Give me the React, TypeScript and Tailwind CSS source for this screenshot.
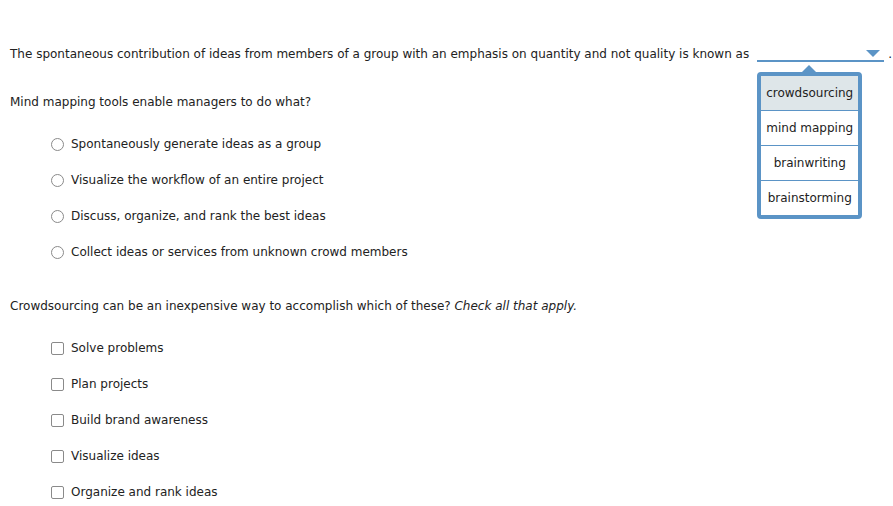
import React from "react";

const radios = [
  "Spontaneously generate ideas as a group",
  "Visualize the workflow of an entire project",
  "Discuss, organize, and rank the best ideas",
  "Collect ideas or services from unknown crowd members",
];

const checks = [
  "Solve problems",
  "Plan projects",
  "Build brand awareness",
  "Visualize ideas",
  "Organize and rank ideas",
];

const options = ["crowdsourcing", "mind mapping", "brainwriting", "brainstorming"];

export default function App() {
  return (
    <div
      className="w-[893px] h-[506px] bg-white text-[#222] text-[12px] overflow-hidden"
      style={{ fontFamily: '"DejaVu Sans", Verdana, sans-serif' }}
    >
      <div className="pt-[45px] pl-[10px] flex items-end">
        <span className="leading-[16px]">
          The spontaneous contribution of ideas from members of a group with an emphasis on quantity and not quality is known as
        </span>
        <div className="relative ml-[8px] w-[127px] h-[17px] border-b-2 border-[#5b94c6]">
          <svg className="absolute right-[4px] top-[5px]" width="14" height="7" viewBox="0 0 14 7">
            <path d="M0 0 H14 L7 7 Z" fill="#5b94c6" />
          </svg>
          <div className="absolute left-0 top-[20px] w-[105px]">
            <div className="flex justify-center">
              <svg width="14" height="7" viewBox="0 0 14 7" className="ml-[-2px]">
                <path d="M0 7 L7 0 L14 7 Z" fill="#5b94c6" />
              </svg>
            </div>
            <div className="border-4 border-[#5b94c6] rounded-[4px] bg-white">
              {options.map((o, i) => (
                <div
                  key={o}
                  className={`flex items-center justify-center ${i > 0 ? "h-[35px] border-t border-[#5b94c6]" : "h-[34px] bg-[#dee6e9]"} ${i === 3 ? "h-[33px]" : ""}`}
                >
                  {o}
                </div>
              ))}
            </div>
          </div>
        </div>
        <span className="ml-[4px] leading-[16px]">.</span>
      </div>

      <div className="pl-[10px] mt-[32px] leading-[16px]">Mind mapping tools enable managers to do what?</div>

      <div className="pl-[51px] mt-[26px] flex flex-col gap-[20px]">
        {radios.map((r) => (
          <div key={r} className="flex items-center h-[16px]">
            <span className="w-[13px] h-[13px] rounded-full border border-[#8a8a8a] bg-white" />
            <span className="ml-[7px] leading-[16px]">{r}</span>
          </div>
        ))}
      </div>

      <div className="pl-[10px] mt-[38px] leading-[16px]">
        Crowdsourcing can be an inexpensive way to accomplish which of these? <i>Check all that apply.</i>
      </div>

      <div className="pl-[51px] mt-[26px] flex flex-col gap-[20px]">
        {checks.map((c) => (
          <div key={c} className="flex items-center h-[16px]">
            <span className="w-[13px] h-[13px] rounded-[2px] border border-[#8a8a8a] bg-white" />
            <span className="ml-[7px] leading-[16px]">{c}</span>
          </div>
        ))}
      </div>
    </div>
  );
}
